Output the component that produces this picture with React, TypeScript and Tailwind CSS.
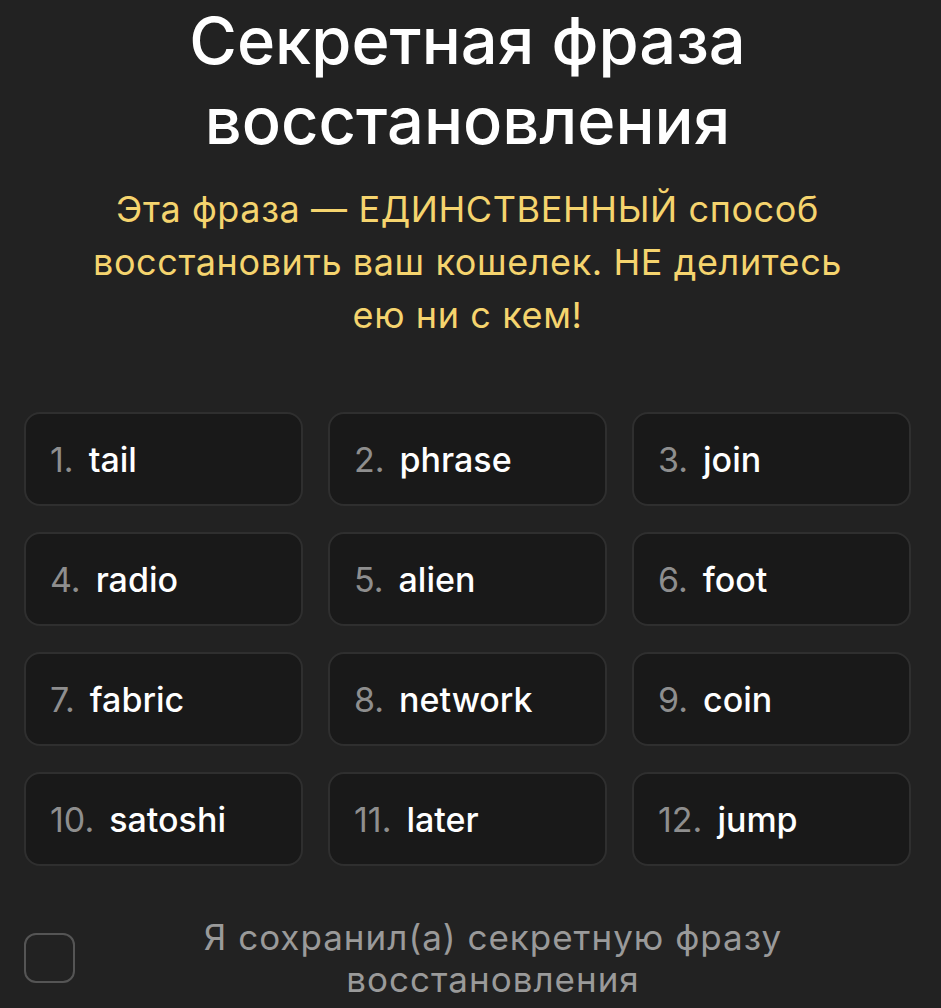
import React from "react";

const words = [
  "tail", "phrase", "join",
  "radio", "alien", "foot",
  "fabric", "network", "coin",
  "satoshi", "later", "jump",
];

export default function App() {
  return (
    <div
      className="min-h-screen w-full bg-[#222222] pl-[24px] pr-[30px] overflow-hidden"
      style={{ fontFamily: "Inter, 'Noto Sans', sans-serif" }}
    >
      <h1 className="text-center text-white text-[65px] leading-[80px] font-medium pt-[1px]">
        Секретная фраза
        <br />
        восстановления
      </h1>
      <p className="mt-[22px] text-center text-[#f5d46e] text-[36px] leading-[53px] tracking-[0.6px] px-[56px]">
        Эта фраза — ЕДИНСТВЕННЫЙ способ восстановить ваш кошелек. НЕ делитесь ею ни с кем!
      </p>
      <div className="mt-[70px] grid grid-cols-3 gap-x-[25px] gap-y-[26px]">
        {words.map((w, i) => (
          <div
            key={w}
            className="h-[94px] rounded-[16px] border-2 border-[#2f2f2f] bg-[#191919] flex items-center pl-[24px]"
          >
            <span className="text-[#8e8e8e] text-[34px]">{i + 1}.</span>
            <span className="ml-[15px] text-white text-[34px] font-medium">{w}</span>
          </div>
        ))}
      </div>
      <div className="mt-[50px] flex items-center">
        <div className="w-[51px] h-[50px] rounded-[12px] border-2 border-[#555] shrink-0" />
        <p className="flex-1 text-center text-[#9a9a9a] text-[35px] leading-[42px] tracking-[1px] px-[20px]">
          Я сохранил(а) секретную фразу восстановления
        </p>
      </div>
    </div>
  );
}
